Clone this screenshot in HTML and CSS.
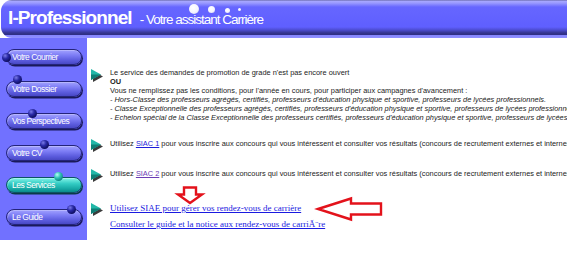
FILE: index.html
```html
<!DOCTYPE html>
<html lang="fr">
<head>
<meta charset="utf-8">
<title>I-Professionnel</title>
<link rel="stylesheet" href="styles.css">
</head>
<body>
<div class="page">
  <header class="topbar">
    <span class="brand">I-Professionnel</span><span class="tag">- Votre assistant Carrière</span>
    <span class="dot d1"></span><span class="dot d2"></span><span class="dot d3"></span><span class="dot d4"></span>
  </header>
  <div class="layout">
    <nav class="side">
      <a class="pill"><span class="ball b1"></span>Votre Courrier</a>
      <a class="pill"><span class="ball b2"></span>Votre Dossier</a>
      <a class="pill"><span class="ball b3"></span>Vos Perspectives</a>
      <a class="pill"><span class="ball b4"></span>Votre CV</a>
      <a class="pill pill-on"><span class="ball ball-on b5"></span>Les Services</a>
      <a class="pill"><span class="ball b6"></span>Le Guide</a>
    </nav>
    <main class="content">
      <div class="row row-promo">
        <span class="ico"><svg width="12" height="13" viewBox="0 0 12 13"><polygon points="2,2 12,7.5 2,13" fill="#3c3c3c"/><polygon points="0,0 10,5.5 0,11" fill="#22b8a8"/><polygon points="0,5.5 10,5.5 0,11" fill="#0f7f76"/></svg></span>
        <div class="txt">
          <div>Le service des demandes de promotion de grade n'est pas encore ouvert</div>
          <div class="bold">OU</div>
          <div>Vous ne remplissez pas les conditions, pour l'année en cours, pour participer aux campagnes d'avancement :</div>
          <div class="it">- Hors-Classe des professeurs agrégés, certifiés, professeurs d'éducation physique et sportive, professeurs de lycées professionnels.</div>
          <div class="it">- Classe Exceptionnelle des professeurs agrégés, certifiés, professeurs d'éducation physique et sportive, professeurs de lycées professionnels.</div>
          <div class="it">- Echelon spécial de la Classe Exceptionnelle des professeurs certifiés, professeurs d'éducation physique et sportive, professeurs de lycées professionnels.</div>
        </div>
      </div>
      <div class="row row-siac1">
        <span class="ico"><svg width="12" height="13" viewBox="0 0 12 13"><polygon points="2,2 12,7.5 2,13" fill="#3c3c3c"/><polygon points="0,0 10,5.5 0,11" fill="#22b8a8"/><polygon points="0,5.5 10,5.5 0,11" fill="#0f7f76"/></svg></span>
        <div class="txt line">Utilisez <a class="lnk">SIAC 1</a> pour vous inscrire aux concours qui vous intéressent et consulter vos résultats (concours de recrutement externes et internes)</div>
      </div>
      <div class="row row-siac2">
        <span class="ico"><svg width="12" height="13" viewBox="0 0 12 13"><polygon points="2,2 12,7.5 2,13" fill="#3c3c3c"/><polygon points="0,0 10,5.5 0,11" fill="#22b8a8"/><polygon points="0,5.5 10,5.5 0,11" fill="#0f7f76"/></svg></span>
        <div class="txt line">Utilisez <a class="lnk lnk-visited">SIAC 2</a> pour vous inscrire aux concours qui vous intéressent et consulter vos résultats (concours de recrutement externes et internes)</div>
      </div>
      <div class="row row-siae">
        <span class="ico"><svg width="12" height="13" viewBox="0 0 12 13"><polygon points="2,2 12,7.5 2,13" fill="#3c3c3c"/><polygon points="0,0 10,5.5 0,11" fill="#22b8a8"/><polygon points="0,5.5 10,5.5 0,11" fill="#0f7f76"/></svg></span>
        <a class="serif-link">Utilisez SIAE pour gérer vos rendez-vous de carrière</a>
      </div>
      <div class="row row-guide">
        <span class="ico"></span>
        <a class="serif-link">Consulter le guide et la notice aux rendez-vous de carriÃ¨re</a>
      </div>
      <svg class="annot annot-down" width="30" height="19" viewBox="0 0 30 19">
        <polygon points="8,1.5 20,1.5 20,8.5 26,8.5 14,17 2,8.5 8,8.5" fill="#fff" stroke="#e3121b" stroke-width="2.4" stroke-linejoin="miter"/>
      </svg>
      <svg class="annot annot-left" width="68" height="24" viewBox="0 0 68 24">
        <polygon points="2,12 35,1.5 35,6.5 65,6.5 65,17.5 35,17.5 35,22.5" fill="#fff" stroke="#e3121b" stroke-width="2.4" stroke-linejoin="miter"/>
      </svg>
    </main>
  </div>
</div>
</body>
</html>
```

FILE: styles.css
```css
html, body {
  margin: 0;
  padding: 0;
  background: #fff;
  overflow: hidden;
}

.page {
  width: 567px;
  height: 260px;
  overflow: hidden;
  font-family: "Liberation Sans", Arial, sans-serif;
}

.topbar {
  position: relative;
  height: 38px;
  margin-left: 1px;
  border-radius: 11px 0 0 11px;
  background: linear-gradient(180deg,
    #5c5c9c 0px, #a9a9ff 1px, #9a9aff 3px, #6666ff 7px,
    #5f5fff 27px, #4c4cd0 30px, #34348e 33px, #2f2f86 34.5px,
    #8484ff 35px, #9090ff 38px);
  display: flex;
  align-items: baseline;
  padding-left: 7px;
  box-sizing: border-box;
  padding-top: 7px;
  color: #fff;
  white-space: nowrap;
}

.brand {
  font-weight: bold;
  font-size: 19px;
  letter-spacing: -0.9px;
}

.tag {
  font-size: 13.5px;
  letter-spacing: -1px;
  margin-left: 8px;
}

.dot {
  position: absolute;
  border-radius: 50%;
  background: radial-gradient(circle at 40% 35%, #ffffff 0%, #f4f4ff 55%, #c8c8e8 100%);
}
.d1 { left: 188px; top: 4px; width: 10px; height: 10px; }
.d2 { left: 207px; top: 6px; width: 7px; height: 7px; }
.d3 { left: 223.5px; top: 7.5px; width: 5px; height: 5px; }
.d4 { left: 236.5px; top: 7.5px; width: 3px; height: 3px; }

.layout {
  display: flex;
  align-items: flex-start;
}

.side {
  flex: none;
  width: 87px;
  height: 202px;
  background: #7171ff;
  box-sizing: border-box;
  padding-top: 11px;
  padding-left: 6px;
  display: flex;
  flex-direction: column;
  gap: 16px;
}

.pill {
  position: relative;
  display: flex;
  align-items: center;
  width: 76px;
  height: 16px;
  box-sizing: border-box;
  padding-left: 5px;
  border: 1px solid #24247a;
  border-radius: 9px;
  background: linear-gradient(180deg, #a2a2ff 0%, #7a7af4 40%, #5a5adc 75%, #4848c4 100%);
  box-shadow: 1px 1.5px 0 #1a1a5a, inset 1px 1px 0 rgba(255,255,255,0.25);
  color: #fff;
  font-size: 8.5px;
  letter-spacing: -0.5px;
  white-space: nowrap;
}

.pill-on {
  border-color: #0c5464;
  background: linear-gradient(180deg, #84f4e8 0%, #34ccc4 40%, #18aaa6 75%, #0a8a8c 100%);
  box-shadow: 1px 1.5px 0 #0a3a48, inset 1px 1px 0 rgba(255,255,255,0.3);
}

.ball {
  position: absolute;
  width: 9px;
  height: 9px;
  border-radius: 50%;
  background: radial-gradient(circle at 35% 30%, #7a7ae8 0%, #2a2aa6 35%, #0c0c5c 75%, #05053a 100%);
}
.ball-on {
  background: radial-gradient(circle at 35% 30%, #b4fff4 0%, #2cc0b4 40%, #0a7a7c 80%, #064a50 100%);
}
.b1 { left: -5.5px; top: 2.5px; }
.b2 { left: 5.5px; top: -7.5px; }
.b3 { left: 20.5px; top: -5.5px; }
.b4 { left: 32.5px; top: -6.5px; }
.b5 { left: 46.5px; top: -6.5px; }
.b6 { left: 59.5px; top: -5.5px; }

.content {
  position: relative;
  flex: 1;
  min-width: 0;
  padding-left: 4px;
  display: flex;
  flex-direction: column;
  white-space: nowrap;
  color: #222;
}

.row {
  display: flex;
  align-items: flex-start;
}

.ico {
  flex: none;
  width: 19px;
  display: flex;
}

.txt {
  font-size: 7.4px;
  line-height: 9px;
}

.bold { font-weight: bold; }
.it { font-style: italic; }

.line {
  line-height: 10px;
}

.row-promo { margin-top: 29.5px; }
.row-promo .ico { padding-top: 1px; }

.row-siac1 { margin-top: 17.5px; }
.row-siac2 { margin-top: 17px; }

.lnk {
  color: #1c1cd8;
  text-decoration: underline;
}
.lnk-visited { color: #6a3cb4; }

.row-siae { margin-top: 20px; }
.row-siae .ico { padding-top: 1px; }
.row-guide { margin-top: 2px; }

.serif-link {
  font-family: "Liberation Serif", "Times New Roman", serif;
  font-size: 9px;
  line-height: 12px;
  color: #1a1ae0;
  text-decoration: underline;
}

.annot {
  position: absolute;
  overflow: visible;
}
.annot-down { left: 89px; top: 148px; }
.annot-left { left: 229px; top: 159px; }
```
